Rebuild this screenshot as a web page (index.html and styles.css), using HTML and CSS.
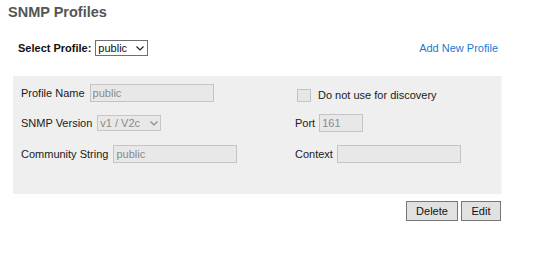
FILE: index.html
```html
<!DOCTYPE html>
<html>
<head>
<meta charset="utf-8">
<link rel="stylesheet" href="styles.css">
</head>
<body>
<div class="page">
  <h1 class="title">SNMP Profiles</h1>
  <div class="toolbar">
    <div class="picker">
      <label class="picker-label" for="profile">Select Profile:</label>
      <span class="select select-active">
        <select id="profile"><option>public</option></select>
        <svg class="chev" width="8" height="5" viewBox="0 0 8 5"><path d="M0.5 0.5 L4 4 L7.5 0.5" fill="none" stroke="#222" stroke-width="1.2"/></svg>
      </span>
    </div>
    <a class="add-link" href="#">Add New Profile</a>
  </div>
  <div class="panel">
    <div class="field">
      <span class="label">Profile Name</span>
      <input class="input w124" type="text" value="public" disabled>
    </div>
    <div class="field check-field">
      <input class="checkbox" type="checkbox" disabled>
      <span class="label">Do not use for discovery</span>
    </div>
    <div class="field">
      <span class="label">SNMP Version</span>
      <span class="select select-disabled">
        <select disabled><option>v1 / V2c</option></select>
        <svg class="chev" width="8" height="5" viewBox="0 0 8 5"><path d="M0.5 0.5 L4 4 L7.5 0.5" fill="none" stroke="#8a8a8a" stroke-width="1.2"/></svg>
      </span>
    </div>
    <div class="field field-right">
      <span class="label">Port</span>
      <input class="input w44" type="text" value="161" disabled>
    </div>
    <div class="field">
      <span class="label">Community String</span>
      <input class="input w124" type="text" value="public" disabled>
    </div>
    <div class="field field-right">
      <span class="label">Context</span>
      <input class="input w124" type="text" value="" disabled>
    </div>
  </div>
  <div class="actions">
    <button class="btn btn-delete" type="button">Delete</button>
    <button class="btn btn-edit" type="button">Edit</button>
  </div>
</div>
</body>
</html>
```
FILE: styles.css
```css
html, body {
  margin: 0;
  padding: 0;
  background: #ffffff;
}
body {
  font-family: "Liberation Sans", Arial, sans-serif;
  font-size: 11px;
  color: #1a1a1a;
}
.page {
  width: 555px;
}
.title {
  margin: 4px 0 0 8px;
  font-size: 14.5px;
  line-height: 17px;
  font-weight: bold;
  color: #555555;
}
.toolbar {
  display: flex;
  justify-content: space-between;
  align-items: center;
  margin: 19px 57px 0 18px;
  height: 16px;
}
.picker {
  display: flex;
  align-items: center;
  gap: 4px;
}
.picker-label {
  font-weight: bold;
  color: #111;
}
.add-link {
  color: #1a7bd1;
  text-decoration: none;
}
.select {
  position: relative;
  display: inline-block;
  height: 16px;
}
.select select {
  appearance: none;
  -webkit-appearance: none;
  box-sizing: border-box;
  height: 16px;
  margin: 0;
  padding: 0 0 0 2px;
  font-family: "Liberation Sans", Arial, sans-serif;
  font-size: 11px;
  line-height: 14px;
  border-radius: 0;
  outline: none;
}
.select .chev {
  position: absolute;
  top: 6px;
  pointer-events: none;
}
.select-active select {
  width: 53px;
  border: 1px solid #6f6f6f;
  background: #ffffff;
  color: #111;
}
.select-active .chev {
  left: 41px;
}
.select-disabled select {
  width: 64px;
  border: 1px solid #c6c6c6;
  background: #e8e8e8;
  color: #8a8a8a;
  opacity: 1;
}
.select-disabled .chev {
  left: 53px;
}
.panel {
  display: grid;
  grid-template-columns: 274px 1fr;
  grid-template-rows: 30px 31px 18px;
  margin: 20px 53px 0 13px;
  padding: 8px 0 31px 8px;
  background: #efefef;
  border-right: 1px solid #f6f6f6;
}
.field {
  display: flex;
  align-items: center;
  gap: 5px;
  height: 18px;
}
.field-right {
  gap: 4px;
}
.check-field {
  margin-top: 2px;
  gap: 7px;
}
.label {
  color: #1a1a1a;
  white-space: nowrap;
}
.input {
  appearance: none;
  -webkit-appearance: none;
  box-sizing: border-box;
  height: 18px;
  margin: 0;
  padding: 0 2px;
  border: 1px solid #c4c4c4;
  border-radius: 0;
  background: #e8e8e8;
  color: #8a8a8a;
  font-family: "Liberation Sans", Arial, sans-serif;
  font-size: 11px;
  opacity: 1;
}
.w124 { width: 124px; }
.w44 { width: 44px; }
.checkbox {
  appearance: none;
  -webkit-appearance: none;
  box-sizing: border-box;
  width: 14px;
  height: 13px;
  margin: 0 0 0 2px;
  border: 1px solid #c2c2c2;
  background: #e6e6e6;
  border-radius: 0;
}
.actions {
  display: flex;
  justify-content: flex-end;
  gap: 3px;
  margin: 7px 54px 0 13px;
}
.btn {
  box-sizing: border-box;
  height: 20px;
  margin: 0;
  padding: 0;
  border: 1px solid #767676;
  border-radius: 0;
  background: #e1e1e1;
  color: #111;
  font-family: "Liberation Sans", Arial, sans-serif;
  font-size: 11px;
}
.btn-delete { width: 52px; }
.btn-edit { width: 40px; }
```
